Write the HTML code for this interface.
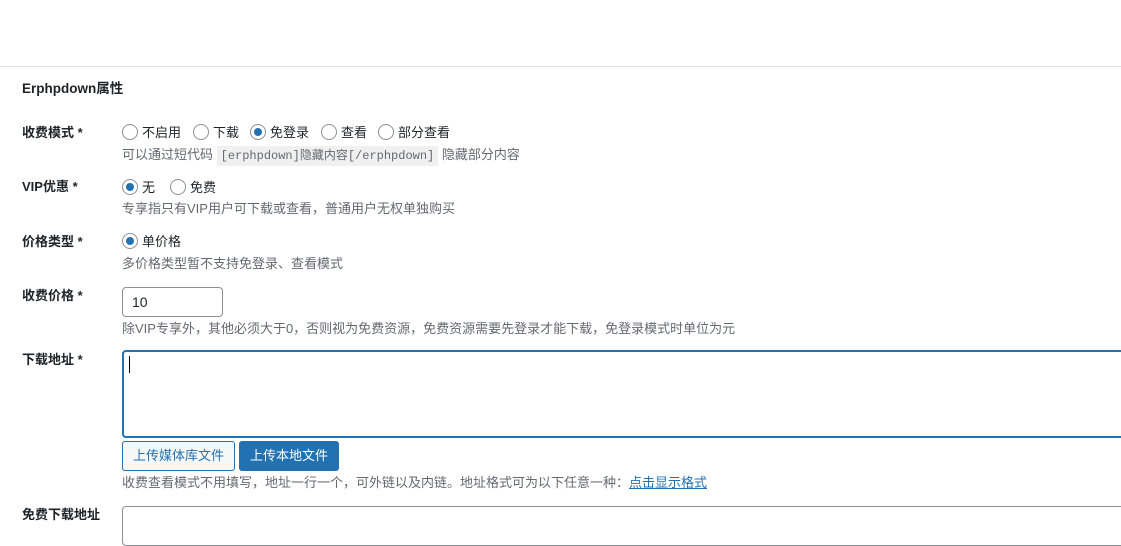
<!DOCTYPE html>
<html><head><meta charset="utf-8"><style>
body{margin:0;width:1121px;height:527px;overflow:hidden;background:#fff;font-family:"Liberation Sans","Noto Sans CJK SC",sans-serif;font-size:13px;color:#1d2327;position:relative}
.a{position:absolute;white-space:nowrap;line-height:18px}
.l{left:22px;font-weight:bold;color:#1d2327}
.h{color:#646970;left:122px}
.r{position:absolute;width:14px;height:14px;border:1px solid #8c8f94;border-radius:50%;background:#fff}
.r.c::after{content:"";position:absolute;left:3px;top:3px;width:8px;height:8px;border-radius:50%;background:#2271b1}
code{font-family:"Liberation Mono",monospace;background:#f0f0f1;padding:3px 4px;font-size:12px}
</style></head><body>
<div style="position:absolute;left:0;top:66px;width:1121px;height:1px;background:#dcdcde"></div>
<div class="a l" style="top:80px;font-size:13.5px">Erphpdown属性</div>

<div class="a l" style="top:124px">收费模式 *</div>
<div class="r" style="left:122px;top:124px"></div><div class="a" style="left:142px;top:124px">不启用</div>
<div class="r" style="left:193px;top:124px"></div><div class="a" style="left:213px;top:124px">下载</div>
<div class="r c" style="left:250px;top:124px"></div><div class="a" style="left:270px;top:124px">免登录</div>
<div class="r" style="left:321px;top:124px"></div><div class="a" style="left:341px;top:124px">查看</div>
<div class="r" style="left:378px;top:124px"></div><div class="a" style="left:398px;top:124px">部分查看</div>
<div class="a h" style="top:146px">可以通过短代码 <code>[erphpdown]隐藏内容[/erphpdown]</code> 隐藏部分内容</div>

<div class="a l" style="top:178px">VIP优惠 *</div>
<div class="r c" style="left:122px;top:179px"></div><div class="a" style="left:142px;top:179px">无</div>
<div class="r" style="left:170px;top:179px"></div><div class="a" style="left:190px;top:179px">免费</div>
<div class="a h" style="top:200px">专享指只有VIP用户可下载或查看，普通用户无权单独购买</div>

<div class="a l" style="top:233px">价格类型 *</div>
<div class="r c" style="left:122px;top:233px"></div><div class="a" style="left:142px;top:233px">单价格</div>
<div class="a h" style="top:255px">多价格类型暂不支持免登录、查看模式</div>

<div class="a l" style="top:287px">收费价格 *</div>
<div style="position:absolute;left:122px;top:287px;border:1px solid #8c8f94;border-radius:4px;box-sizing:border-box;width:101px;height:30px"></div>
<div class="a" style="left:132px;top:293px;font-size:14px">10</div>
<div class="a h" style="top:320px">除VIP专享外，其他必须大于0，否则视为免费资源，免费资源需要先登录才能下载，免登录模式时单位为元</div>

<div class="a l" style="top:351px">下载地址 *</div>
<div style="position:absolute;left:122px;top:350px;width:1010px;height:88px;border:2px solid #2271b1;border-radius:4px;box-sizing:border-box"></div>
<div style="position:absolute;left:129px;top:356px;width:1px;height:17px;background:#000"></div>
<div class="a" style="left:122px;top:441px;width:111px;height:28px;border:1px solid #2271b1;border-radius:3px;background:#f6f7f7;color:#2271b1;text-align:center;line-height:28px">上传媒体库文件</div>
<div class="a" style="left:239px;top:441px;width:100px;height:30px;border-radius:3px;background:#2271b1;color:#fff;text-align:center;line-height:30px">上传本地文件</div>
<div class="a h" style="top:474px">收费查看模式不用填写，地址一行一个，可外链以及内链。地址格式可为以下任意一种：<span style="color:#2271b1;text-decoration:underline">点击显示格式</span></div>

<div class="a l" style="top:506px">免费下载地址</div>
<div style="position:absolute;left:122px;top:506px;width:1010px;height:40px;border:1px solid #8c8f94;border-radius:4px;box-sizing:border-box"></div>
</body></html>
